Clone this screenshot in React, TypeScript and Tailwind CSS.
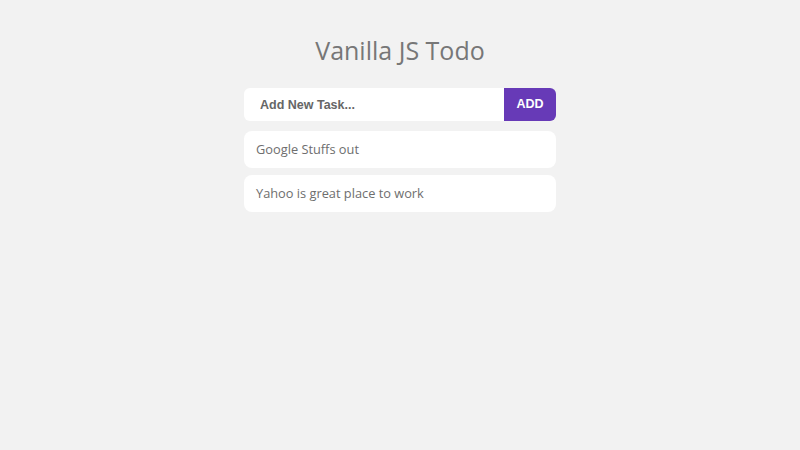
export default function App() {
  const tasks = ["Google Stuffs out", "Yahoo is great place to work"];
  return (
    <div className="min-h-[450px] w-full bg-[#f2f2f2] font-['Open_Sans',sans-serif]">
      <div className="mx-auto w-[312px] pt-[30px]">
        <h1 className="text-center text-[25px] font-normal leading-[40px] text-[#777]">
          Vanilla JS Todo
        </h1>
        <form className="mt-[18px] flex h-[33px]" onSubmit={(e) => e.preventDefault()}>
          <input
            className="h-full flex-1 rounded-l-[6px] bg-white pl-[16px] font-['Liberation_Sans',Arial,sans-serif] text-[12.5px] font-bold text-[#666] outline-none placeholder:text-[#666]"
            placeholder="Add New Task..."
          />
          <button
            type="submit"
            className="h-full w-[52px] rounded-r-[6px] bg-[#673ab7] font-['Liberation_Sans',Arial,sans-serif] text-[12.5px] font-bold text-white"
          >
            ADD
          </button>
        </form>
        <ul className="mt-[10px] flex flex-col gap-[7px]">
          {tasks.map((t) => (
            <li
              key={t}
              className="flex h-[37px] items-center rounded-[8px] bg-white px-[12px] text-[12.8px] text-[#6e6e6e]"
            >
              {t}
            </li>
          ))}
        </ul>
      </div>
    </div>
  );
}
